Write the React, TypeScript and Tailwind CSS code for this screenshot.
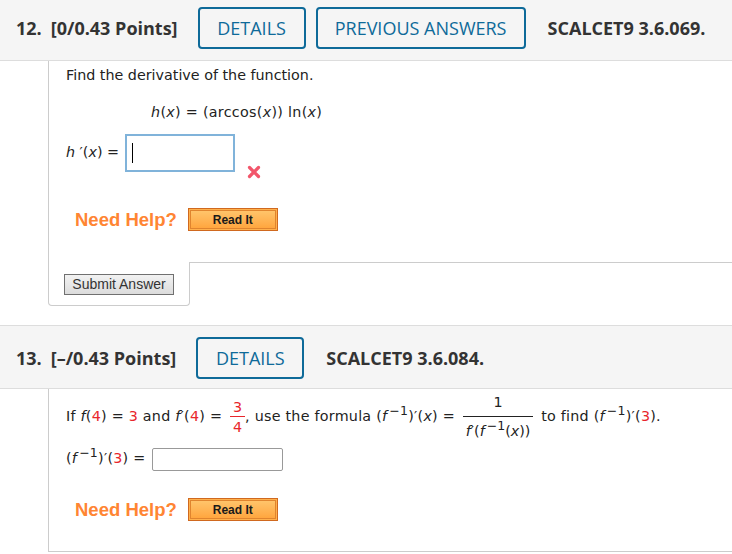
import React from "react";

const math = "font-['DejaVu_Sans','Verdana',sans-serif] text-[14.3px] text-[#222]";
const red = "text-[#e8262c]";

function Frac({
  num,
  den,
  className = "",
  numPad,
  denPad,
}: {
  num: React.ReactNode;
  den: React.ReactNode;
  className?: string;
  numPad: string;
  denPad: string;
}) {
  return (
    <span className={`inline-flex flex-col items-center align-middle mx-[3px] tracking-normal ${className}`}>
      <span className={`leading-[14px] ${numPad}`}>{num}</span>
      <span className="h-px w-full bg-current" />
      <span className={`leading-[14px] px-[3px] whitespace-pre ${denPad}`}>{den}</span>
    </span>
  );
}

function Inv() {
  return (
    <>
      <i>f</i>
      <span className="relative -top-[6px] text-[12.5px] ml-[2px]">−1</span>
    </>
  );
}

function Header({ num, pts, prev, code, className }: { num: string; pts: string; prev?: boolean; code: string; className: string }) {
  return (
    <div className={`flex items-center bg-[#f5f5f5] border-[#dddddd] pl-[16px] font-['Open_Sans',sans-serif] text-[18px] text-[#333333] ${className}`}>
      <span className="font-bold">{num}</span>
      <span className="font-bold ml-[9px]">{pts}</span>
      <span className="ml-[20px] w-[108px] h-[42px] flex items-center justify-center border-2 border-[#0e6a99] rounded-[4px] text-[#0e6a99] font-medium">
        DETAILS
      </span>
      {prev && (
        <span className="ml-[10px] w-[210px] h-[42px] flex items-center justify-center border-2 border-[#0e6a99] rounded-[4px] text-[#0e6a99] font-medium">
          PREVIOUS ANSWERS
        </span>
      )}
      <span className="font-bold ml-[22px]">{code}</span>
    </div>
  );
}

function HelpRow({ className }: { className: string }) {
  return (
    <div className={`flex items-center ml-[9px] h-[23px] ${className}`}>
      <span className="font-['Liberation_Sans',Arial,sans-serif] font-bold text-[18.5px] text-[#ff8533]">Need Help?</span>
      <span className="ml-[11px] w-[90px] h-[23px] border border-[#d0691f] bg-[#ffb04c] p-px flex">
        <span className="flex-1 flex items-center justify-center border border-[#e0842e] bg-gradient-to-b from-[#ffc46a] to-[#ffa63e] font-['Liberation_Sans',Arial,sans-serif] font-bold text-[12px] text-[#1a1a1a]">
          Read It
        </span>
      </span>
    </div>
  );
}

export default function App() {
  return (
    <div className="w-[732px] h-[554px] bg-white overflow-hidden">
      <Header num="12." pts="[0/0.43 Points]" prev code="SCALCET9 3.6.069." className="border-b pt-[7px] pb-[11px]" />

      <div className={`ml-[48px] h-[202px] border-l border-b border-[#cccccc] pl-[17px] pt-[3px] ${math}`}>
        <div className="h-[22px] leading-[22px]">Find the derivative of the function.</div>
        <div className="h-[22px] leading-[22px] mt-[15px] ml-[85px] whitespace-pre tracking-[0.3px]">
          <i>h</i>(<i>x</i>) = (arccos(<i>x</i>)) ln(<i>x</i>)
        </div>
        <div className="flex items-center h-[38px] mt-[11px]">
          <span className="whitespace-pre">
            <i>h</i> ′(<i>x</i>) ={" "}
          </span>
          <span className="ml-[1px] w-[110px] h-[38px] border-2 border-[#80b3da] bg-white flex items-center pl-[5px]">
            <span className="w-px h-[20px] bg-black" />
          </span>
          <svg className="relative top-[19px] ml-[12px]" width="14" height="14" viewBox="0 0 14 14">
            <path d="M2.5 2.5 L11.5 11.5 M11.5 2.5 L2.5 11.5" stroke="#f2566b" strokeWidth="3.2" strokeLinecap="round" />
          </svg>
        </div>
        <HelpRow className="mt-[36px]" />
      </div>

      <div className="ml-[48px] w-[142px] h-[44px] -mt-px bg-white border-l border-r border-b border-[#cccccc] rounded-b-[4px] pl-[15px] pt-[12px]">
        <button className="block w-[110px] h-[21px] border border-[#707070] bg-gradient-to-b from-[#f2f2f2] to-[#dcdcdc] font-['Liberation_Sans',Arial,sans-serif] text-[14px] text-[#333333] leading-[19px]">
          Submit Answer
        </button>
      </div>

      <Header num="13." pts="[–/0.43 Points]" code="SCALCET9 3.6.084." className="mt-[19px] border-t border-b pt-[11px] pb-[9px]" />

      <div className={`ml-[48px] h-[163px] border-l border-b border-[#cccccc] pl-[17px] pt-[6px] ${math}`}>
        <div className="h-[40px] leading-[40px] whitespace-pre tracking-[0.25px]">
          If <i>f</i>(<span className={red}>4</span>) = <span className={red}>3</span> and <i>f</i>′(<span className={red}>4</span>) ={" "}
          <Frac className={red} num="3" den="4" numPad="pb-[2px]" denPad="pt-[3px]" />
          <span className="-ml-[3px]">, use the formula (</span>
          <Inv />)′(<i>x</i>) ={" "}
          <Frac
            num="1"
            numPad="pb-[7px]"
            denPad="pt-[7px]"
            den={
              <>
                <i>f</i>′(<Inv />(<i>x</i>))
              </>
            }
          />{" "}
          to find (<Inv />)′(<span className={red}>3</span>).
        </div>
        <div className="flex items-center h-[22px] mt-[13px]">
          <span className="whitespace-pre tracking-[0.25px]">
            (<Inv />)′(<span className={red}>3</span>) ={" "}
          </span>
          <span className="ml-[2px] w-[131px] h-[23px] border border-[#999999] rounded-[2px] bg-white" />
        </div>
        <HelpRow className="mt-[28px]" />
      </div>
    </div>
  );
}
